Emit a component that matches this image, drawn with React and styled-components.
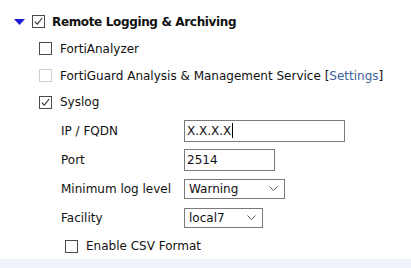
import React from "react";
import styled, { createGlobalStyle } from "styled-components";

const GlobalStyle = createGlobalStyle`
  html, body {
    margin: 0;
    padding: 0;
    background: #fff;
  }
  body {
    font-family: "DejaVu Sans", Verdana, sans-serif;
    font-size: 12px;
    color: #111;
  }
`;

const Page = styled.div`
  width: 411px;
  height: 268px;
  display: flex;
  flex-direction: column;
  overflow: hidden;
`;

const Section = styled.div`
  padding: 8px 0 0 14px;
  height: 251px;
`;

const Header = styled.div`
  display: flex;
  align-items: center;
  height: 27px;
  gap: 7px;
`;

const Title = styled.span`
  font-weight: bold;
  letter-spacing: -0.35px;
`;

const Body = styled.div`
  padding-left: 25px;
`;

const Row = styled.div`
  display: flex;
  align-items: center;
  gap: 8px;
  height: ${(p) => p.$h || 27}px;
  padding-left: ${(p) => p.$indent || 0}px;
`;

const Link = styled.span`
  color: #3d5f9c;
`;

const Fields = styled.div`
  display: grid;
  grid-template-columns: 123px auto;
  grid-auto-rows: 29px;
  align-items: center;
  padding-left: 22px;
  margin-top: 1px;
`;

const TextBox = styled.div`
  box-sizing: border-box;
  width: ${(p) => p.$w}px;
  height: 22px;
  border: 1px solid #7a7a7a;
  padding: 0 2px;
  display: flex;
  align-items: center;
`;

const Caret = styled.span`
  display: inline-block;
  width: 1px;
  height: 15px;
  background: #000;
  margin-left: 1px;
`;

const Select = styled.div`
  box-sizing: border-box;
  width: ${(p) => p.$w}px;
  height: 20px;
  border: 1px solid #7a7a7a;
  padding: 0 6px 0 4px;
  display: flex;
  align-items: center;
  justify-content: space-between;
`;

const Footer = styled.div`
  flex: 1;
  background: #f0f4fa;
`;

const Triangle = () => (
  <svg width="11" height="6" viewBox="0 0 11 6">
    <polygon points="0,0 11,0 5.5,6" fill="#1a1ad6" />
  </svg>
);

const Check = ({ checked, disabled }) => (
  <svg width="13" height="13" viewBox="0 0 13 13">
    <rect
      x="0.5"
      y="0.5"
      width="12"
      height="12"
      fill="#fff"
      stroke={disabled ? "#cfcfcf" : "#4a4a4a"}
    />
    {checked && (
      <polyline
        points="2.8,6.6 5.3,9.2 10.2,3"
        fill="none"
        stroke="#333"
        strokeWidth="1.1"
      />
    )}
  </svg>
);

const Chevron = () => (
  <svg width="9" height="5" viewBox="0 0 9 5">
    <polyline points="0.5,0.5 4.5,4.5 8.5,0.5" fill="none" stroke="#555" strokeWidth="1" />
  </svg>
);

export default function App() {
  return (
    <Page>
      <GlobalStyle />
      <Section>
        <Header>
          <Triangle />
          <Check checked />
          <Title>Remote Logging &amp; Archiving</Title>
        </Header>
        <Body>
          <Row>
            <Check />
            <span>FortiAnalyzer</span>
          </Row>
          <Row>
            <Check disabled />
            <span>
              FortiGuard Analysis &amp; Management Service [<Link>Settings</Link>]
            </span>
          </Row>
          <Row $h={26}>
            <Check checked />
            <span>Syslog</span>
          </Row>
          <Fields>
            <span>IP / FQDN</span>
            <TextBox $w={161}>
              X.X.X.X
              <Caret />
            </TextBox>
            <span>Port</span>
            <TextBox $w={91}>2514</TextBox>
            <span>Minimum log level</span>
            <Select $w={101}>
              Warning
              <Chevron />
            </Select>
            <span>Facility</span>
            <Select $w={79}>
              local7
              <Chevron />
            </Select>
          </Fields>
          <Row $h={28} $indent={26}>
            <Check />
            <span>Enable CSV Format</span>
          </Row>
        </Body>
      </Section>
      <Footer />
    </Page>
  );
}
